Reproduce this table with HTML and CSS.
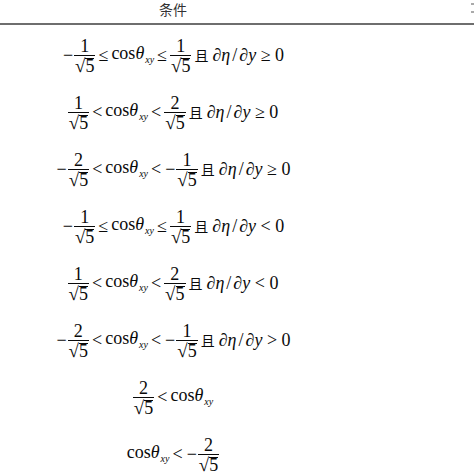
FILE: index.html
```html
<!DOCTYPE html>
<html lang="zh">
<head>
<meta charset="utf-8">
<link rel="stylesheet" href="styles.css">
</head>
<body>
<div class="page">
  <div class="head">
    <div class="hcell">条件</div>
    <div class="hcell2"><span class="mark"></span><span class="mark"></span></div>
  </div>
  <div class="rows">
    <div class="row">
      <span class="op">−</span>
      <span class="frac"><span class="num">1</span><span class="bar"></span><span class="den"><span class="rad">√</span><span class="rc">5</span></span></span>
      <span class="op rel">≤</span>
      <span class="t">cos<i>θ</i><i class="sub">xy</i></span>
      <span class="op rel">≤</span>
      <span class="frac"><span class="num">1</span><span class="bar"></span><span class="den"><span class="rad">√</span><span class="rc">5</span></span></span>
      <span class="cjk">且</span>
      <span class="t">∂<i>η</i><span class="sl">/</span>∂<i>y</i> ≥ 0</span>
    </div>
    <div class="row">
      <span class="frac"><span class="num">1</span><span class="bar"></span><span class="den"><span class="rad">√</span><span class="rc">5</span></span></span>
      <span class="op rel">&lt;</span>
      <span class="t">cos<i>θ</i><i class="sub">xy</i></span>
      <span class="op rel">&lt;</span>
      <span class="frac"><span class="num">2</span><span class="bar"></span><span class="den"><span class="rad">√</span><span class="rc">5</span></span></span>
      <span class="cjk">且</span>
      <span class="t">∂<i>η</i><span class="sl">/</span>∂<i>y</i> ≥ 0</span>
    </div>
    <div class="row">
      <span class="op">−</span>
      <span class="frac"><span class="num">2</span><span class="bar"></span><span class="den"><span class="rad">√</span><span class="rc">5</span></span></span>
      <span class="op rel">&lt;</span>
      <span class="t">cos<i>θ</i><i class="sub">xy</i></span>
      <span class="op rel">&lt;</span>
      <span class="op">−</span>
      <span class="frac"><span class="num">1</span><span class="bar"></span><span class="den"><span class="rad">√</span><span class="rc">5</span></span></span>
      <span class="cjk">且</span>
      <span class="t">∂<i>η</i><span class="sl">/</span>∂<i>y</i> ≥ 0</span>
    </div>
    <div class="row">
      <span class="op">−</span>
      <span class="frac"><span class="num">1</span><span class="bar"></span><span class="den"><span class="rad">√</span><span class="rc">5</span></span></span>
      <span class="op rel">≤</span>
      <span class="t">cos<i>θ</i><i class="sub">xy</i></span>
      <span class="op rel">≤</span>
      <span class="frac"><span class="num">1</span><span class="bar"></span><span class="den"><span class="rad">√</span><span class="rc">5</span></span></span>
      <span class="cjk">且</span>
      <span class="t">∂<i>η</i><span class="sl">/</span>∂<i>y</i> &lt; 0</span>
    </div>
    <div class="row">
      <span class="frac"><span class="num">1</span><span class="bar"></span><span class="den"><span class="rad">√</span><span class="rc">5</span></span></span>
      <span class="op rel">&lt;</span>
      <span class="t">cos<i>θ</i><i class="sub">xy</i></span>
      <span class="op rel">&lt;</span>
      <span class="frac"><span class="num">2</span><span class="bar"></span><span class="den"><span class="rad">√</span><span class="rc">5</span></span></span>
      <span class="cjk">且</span>
      <span class="t">∂<i>η</i><span class="sl">/</span>∂<i>y</i> &lt; 0</span>
    </div>
    <div class="row">
      <span class="op">−</span>
      <span class="frac"><span class="num">2</span><span class="bar"></span><span class="den"><span class="rad">√</span><span class="rc">5</span></span></span>
      <span class="op rel">&lt;</span>
      <span class="t">cos<i>θ</i><i class="sub">xy</i></span>
      <span class="op rel">&lt;</span>
      <span class="op">−</span>
      <span class="frac"><span class="num">1</span><span class="bar"></span><span class="den"><span class="rad">√</span><span class="rc">5</span></span></span>
      <span class="cjk">且</span>
      <span class="t">∂<i>η</i><span class="sl">/</span>∂<i>y</i> &gt; 0</span>
    </div>
    <div class="row">
      <span class="frac"><span class="num">2</span><span class="bar"></span><span class="den"><span class="rad">√</span><span class="rc">5</span></span></span>
      <span class="op rel">&lt;</span>
      <span class="t">cos<i>θ</i><i class="sub">xy</i></span>
    </div>
    <div class="row">
      <span class="t">cos<i>θ</i><i class="sub">xy</i></span>
      <span class="op rel">&lt;</span>
      <span class="op">−</span>
      <span class="frac"><span class="num">2</span><span class="bar"></span><span class="den"><span class="rad">√</span><span class="rc">5</span></span></span>
    </div>
  </div>
</div>
</body>
</html>
```

FILE: styles.css
```css
html, body {
  margin: 0;
  padding: 0;
  background: #ffffff;
}
body {
  width: 474px;
  height: 474px;
  overflow: hidden;
  font-family: "Liberation Serif", "Times New Roman", serif;
  color: #0a0a0a;
}
.page {
  width: 474px;
}
.head {
  display: grid;
  grid-template-columns: 346px 1fr;
  height: 23px;
  border-bottom: 2px solid #6e6e6e;
}
.hcell {
  text-align: center;
  font-family: "Noto Sans CJK SC", sans-serif;
  font-size: 14px;
  line-height: 18px;
  color: #333;
}
.hcell2 {
  display: flex;
  flex-direction: column;
  align-items: flex-end;
  gap: 6px;
  padding-top: 3px;
}
.mark {
  width: 3px;
  height: 2px;
  background: #aaa;
}
.rows {
  width: 346px;
  display: flex;
  flex-direction: column;
  padding-top: 1px;
}
.row {
  height: 57px;
  display: flex;
  align-items: center;
  justify-content: center;
  font-family: "Liberation Serif", "Times New Roman", serif;
  font-size: 18px;
  line-height: 18px;
}
.frac {
  display: inline-flex;
  flex-direction: column;
  align-items: stretch;
  margin-top: 3px;
}
.num {
  text-align: center;
  height: 17px;
  line-height: 17px;
}
.bar {
  height: 1px;
  background: #0a0a0a;
}
.den {
  display: flex;
  justify-content: center;
  align-items: flex-start;
  height: 17px;
  padding-top: 1px;
  padding-left: 1px;
  padding-right: 1px;
}
.rad {
  font-size: 19px;
  line-height: 17px;
}
.rc {
  line-height: 15px;
  border-top: 1px solid #0a0a0a;
  margin-top: 1px;
}
.op {
  padding: 0 1px;
}
.rel {
  padding: 0 3px;
}
.t {
  white-space: nowrap;
}
.t i {
  font-style: italic;
}
.sl {
  padding: 0 2px;
}
.sub {
  font-size: 10px;
  position: relative;
  top: 4px;
  margin-left: 1px;
}
.cjk {
  font-family: "Noto Sans CJK SC", sans-serif;
  font-size: 14px;
  margin: 0 4px 0 3px;
}
```
